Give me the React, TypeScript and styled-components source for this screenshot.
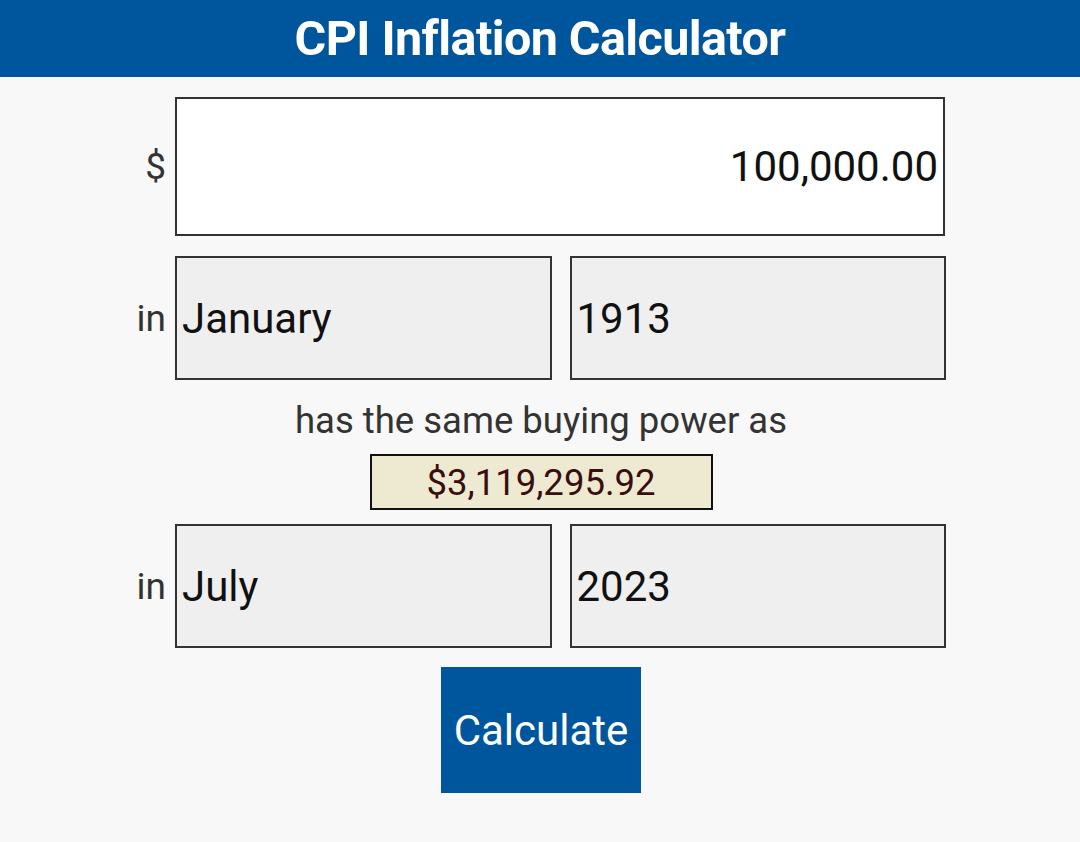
import React, { useState } from 'react';
import styled, { createGlobalStyle } from 'styled-components';

const GlobalStyle = createGlobalStyle`
  html, body {
    margin: 0;
    padding: 0;
    background: #f8f8f8;
    font-family: Roboto, "Liberation Sans", Arial, sans-serif;
  }
`;

const Page = styled.div`
  min-height: 842px;
  background: #f8f8f8;
`;

const Header = styled.header`
  height: 77px;
  background: #00569d;
  display: flex;
  align-items: center;
  justify-content: center;
`;

const Title = styled.h1`
  margin: 0;
  color: #ffffff;
  font-size: 48.5px;
  font-weight: 700;
  letter-spacing: -0.6px;
`;

const Form = styled.div`
  width: 810px;
  margin: 0 auto;
  padding: 20px 0 0 2px;
  display: flex;
  flex-direction: column;
  align-items: stretch;
`;

const Row = styled.div<{ $height: number; $mb: number }>`
  display: grid;
  grid-template-columns: 30px 1fr;
  column-gap: 9px;
  align-items: center;
  height: ${p => p.$height}px;
  margin-bottom: ${p => p.$mb}px;
`;

const Label = styled.span`
  text-align: right;
  font-size: 37px;
  color: #333333;
`;

const AmountBox = styled.div`
  box-sizing: border-box;
  height: 100%;
  margin-right: 1px;
  background: #ffffff;
  border: 2px solid #333333;
  display: flex;
  align-items: center;
  justify-content: flex-end;
  padding: 0 5px;
  font-size: 42px;
  color: #111111;
`;

const Pair = styled.div`
  display: grid;
  grid-template-columns: 1fr 1fr;
  column-gap: 18px;
  height: 100%;
`;

const SelectBox = styled.div`
  box-sizing: border-box;
  background: #efefef;
  border: 2px solid #333333;
  display: flex;
  align-items: center;
  padding: 0 5px;
  font-size: 42px;
  color: #111111;
`;

const Middle = styled.div`
  display: flex;
  flex-direction: column;
  align-items: center;
`;

const Phrase = styled.p`
  margin: 0;
  height: 74px;
  line-height: 82px;
  font-size: 36.5px;
  color: #333333;
`;

const Result = styled.div`
  box-sizing: border-box;
  width: 343px;
  height: 56px;
  background: #eeead1;
  border: 2px solid #111111;
  display: flex;
  align-items: center;
  justify-content: center;
  font-size: 36.5px;
  color: #3a0e0e;
  margin-bottom: 14px;
`;

const ButtonWrap = styled.div`
  display: flex;
  justify-content: center;
`;

const CalcButton = styled.button`
  width: 200px;
  height: 126px;
  border: none;
  background: #00569d;
  color: #ffffff;
  font-family: Roboto, "Liberation Sans", Arial, sans-serif;
  font-size: 42px;
  cursor: pointer;
`;

const App: React.FC = () => {
  const [amount] = useState('100,000.00');

  return (
    <Page>
      <GlobalStyle />
      <Header>
        <Title>CPI Inflation Calculator</Title>
      </Header>
      <Form>
        <Row $height={139} $mb={20}>
          <Label>$</Label>
          <AmountBox>{amount}</AmountBox>
        </Row>
        <Row $height={124} $mb={0}>
          <Label>in</Label>
          <Pair>
            <SelectBox>January</SelectBox>
            <SelectBox>1913</SelectBox>
          </Pair>
        </Row>
        <Middle>
          <Phrase>has the same buying power as</Phrase>
          <Result>$3,119,295.92</Result>
        </Middle>
        <Row $height={124} $mb={19}>
          <Label>in</Label>
          <Pair>
            <SelectBox>July</SelectBox>
            <SelectBox>2023</SelectBox>
          </Pair>
        </Row>
        <ButtonWrap>
          <CalcButton>Calculate</CalcButton>
        </ButtonWrap>
      </Form>
    </Page>
  );
};

export default App;
